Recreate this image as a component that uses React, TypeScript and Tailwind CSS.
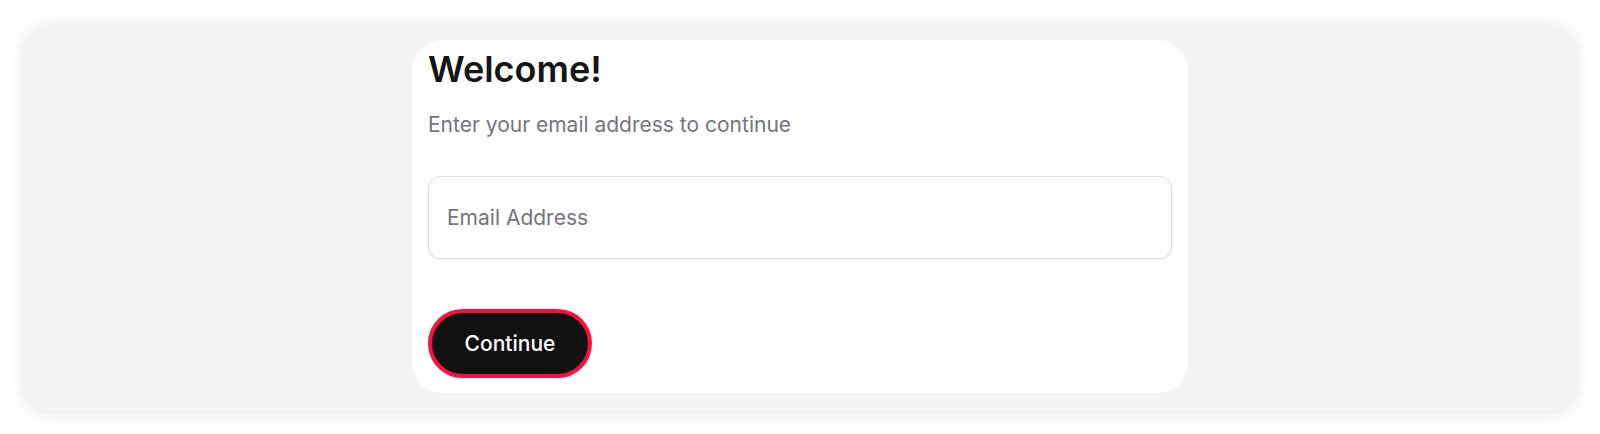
import React, { useState } from 'react'

export default function App() {
  const [email, setEmail] = useState('')

  return (
    <div className="min-h-screen bg-white pt-[25px] px-[24px] font-['Inter',sans-serif]">
      {/* Outer panel */}
      <div className="flex justify-center rounded-[28px] bg-[#f4f4f4] pt-[15px] pb-[18px] shadow-[0_2px_16px_rgba(0,0,0,0.11)]">
        {/* Card */}
        <div className="w-[776px] rounded-[30px] bg-white px-4 pt-[7px] pb-[15px]">
          <h1 className="text-[36px] leading-[44px] font-semibold text-[#151515]">Welcome!</h1>
          <p className="mt-5 text-[21px] leading-[28px] text-[#75757d]">
            Enter your email address to continue
          </p>

          <input
            type="email"
            value={email}
            onChange={(e) => setEmail(e.target.value)}
            placeholder="Email Address"
            className="mt-[37px] block h-[83px] w-full rounded-xl border border-[#dedede] bg-white px-[18px] text-[21px] text-[#151515] shadow-[0_1px_2px_rgba(0,0,0,0.08)] outline-none placeholder:text-[#74747c]"
          />

          <button
            type="button"
            className="mt-[50px] flex h-[69px] w-[164px] items-center justify-center rounded-full border-4 border-[#ff0f3f] bg-[#111111] text-[21px] font-medium text-white"
          >
            Continue
          </button>
        </div>
      </div>
    </div>
  )
}
